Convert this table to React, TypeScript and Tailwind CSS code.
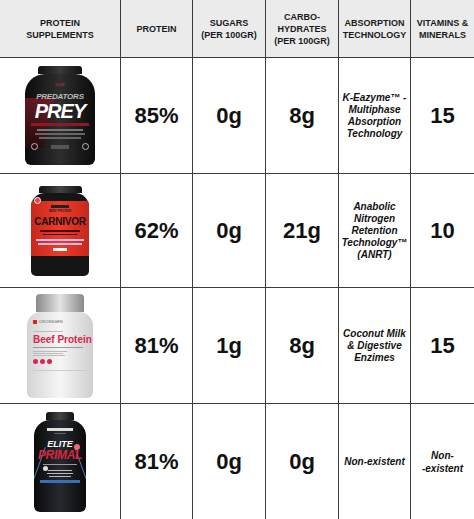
import React from 'react';

type Row = {
  tub: React.ReactNode;
  protein: string;
  sugars: string;
  carbs: string;
  tech: string[];
  vitamins: string | string[];
};

const PreyTub = () => (
  <div className="flex flex-col items-center">
    <div className="w-[44px] h-[8px] rounded-t-[3px] bg-gradient-to-r from-[#111] via-[#3a3a3a] to-[#111]" />
    <div className="relative w-[70px] h-[91px] rounded-t-[20px] rounded-b-[6px] bg-gradient-to-r from-[#0c0c0c] via-[#2e2e2e] to-[#0c0c0c] overflow-hidden flex flex-col items-center pt-[10px]">
      <div className="absolute left-[-6px] top-[24px] w-[30px] h-[50px] -skew-x-12 bg-gradient-to-b from-[#7a1a22] to-[#2a0a0c] opacity-80" />
      <div className="text-[3px] text-[#c33] leading-none">IDONE</div>
      <div className="relative mt-[6px] text-[8px] font-bold italic text-[#bdbdbd] leading-none tracking-tight">PREDATORS</div>
      <div className="relative text-[20px] font-black italic text-white leading-none tracking-tighter">PREY</div>
      <div className="relative mt-[2px] w-[58px] h-[3px] bg-[#8b1a22]" />
      <div className="relative mt-[3px] w-[46px] h-[2px] bg-[#777]" />
      <div className="relative mt-[2px] w-[50px] h-[2px] bg-[#666]" />
      <div className="relative mt-[2px] w-[42px] h-[2px] bg-[#666]" />
      <div className="relative mt-[4px] w-[58px] flex justify-between items-center">
        <div className="w-[7px] h-[7px] rounded-full border border-[#bbb]" />
        <div className="w-[18px] h-[4px] bg-[#555]" />
        <div className="w-[7px] h-[7px] rounded-full border border-[#bbb]" />
      </div>
    </div>
  </div>
);

const CarnivorTub = () => (
  <div className="flex flex-col items-center">
    <div className="w-[43px] h-[7px] rounded-t-[3px] bg-gradient-to-r from-[#111] via-[#444] to-[#111]" />
    <div className="relative w-[58px] h-[83px] rounded-t-[14px] rounded-b-[5px] bg-[#151515] overflow-hidden flex flex-col items-center">
      <div className="mt-[8px] w-full h-[55px] bg-gradient-to-r from-[#c8281c] via-[#ee3b2a] to-[#c8281c] flex flex-col items-center pt-[4px]">
        <div className="w-[18px] h-[3px] bg-[#222]" />
        <div className="mt-[2px] text-[3px] font-bold text-[#222] leading-none">BEEF PROTEIN</div>
        <div className="mt-[4px] text-[10px] font-bold text-[#111] leading-none tracking-tight">CARNIVOR</div>
        <div className="mt-[3px] w-[40px] h-[2px] bg-[#400]" />
        <div className="mt-[2px] w-[34px] h-[1px] bg-[#400]" />
        <div className="mt-[4px] w-[48px] h-[2px] bg-[#fbe]" />
        <div className="mt-[2px] w-[44px] h-[2px] bg-[#fbe]" />
        <div className="mt-[3px] w-[14px] h-[3px] bg-white" />
      </div>
      <div className="absolute left-[3px] top-[4px] w-[7px] h-[7px] rounded-full bg-[#e44] border border-white" />
    </div>
  </div>
);

const BeefTub = () => (
  <div className="flex flex-col items-center">
    <div className="w-[48px] h-[18px] rounded-t-[4px] bg-gradient-to-r from-[#8a8a8a] via-[#e4e4e4] to-[#8a8a8a]" />
    <div className="w-[66px] h-[86px] rounded-t-[14px] rounded-b-[6px] bg-gradient-to-r from-[#d4d4d4] via-[#f6f6f6] to-[#cfcfcf] flex flex-col items-start pl-[6px] pt-[8px]">
      <div className="flex items-center gap-[2px]">
        <div className="w-[4px] h-[4px] bg-[#d22]" />
        <div className="text-[4px] text-[#555] leading-none tracking-wide">CROSSGEN</div>
      </div>
      <div className="mt-[5px] w-[30px] h-[3px] border-b border-[#bbb] rounded-full" />
      <div className="mt-[3px] text-[10px] font-bold text-[#d8264c] leading-none">Beef Protein</div>
      <div className="mt-[2px] w-[50px] h-[1px] bg-[#999]" />
      <div className="mt-[3px] w-[34px] h-[1px] bg-[#bbb]" />
      <div className="mt-[1px] w-[30px] h-[1px] bg-[#bbb]" />
      <div className="mt-[1px] w-[32px] h-[1px] bg-[#bbb]" />
      <div className="mt-[3px] flex gap-[2px]">
        <div className="w-[5px] h-[5px] rounded-full bg-[#d8264c]" />
        <div className="w-[5px] h-[5px] rounded-full bg-[#d8264c]" />
        <div className="w-[5px] h-[5px] rounded-full bg-[#d8264c]" />
      </div>
      <div className="mt-[6px] w-[54px] h-[1px] bg-[#ccc]" />
    </div>
  </div>
);

const PrimalTub = () => (
  <div className="flex flex-col items-center">
    <div className="w-[28px] h-[8px] rounded-t-[3px] bg-gradient-to-r from-[#111] via-[#444] to-[#111]" />
    <div className="relative w-[52px] h-[92px] rounded-t-[16px] rounded-b-[6px] bg-gradient-to-r from-[#0a0a0a] via-[#262a30] to-[#0a0a0a] overflow-hidden flex flex-col items-center pt-[8px]">
      <div className="absolute left-[4px] top-[26px] w-[1px] h-[40px] bg-[#4a7ab8] rotate-[20deg]" />
      <div className="absolute right-[4px] top-[26px] w-[1px] h-[40px] bg-[#4a7ab8] -rotate-[20deg]" />
      <div className="w-[26px] h-[3px] bg-[#ddd]" />
      <div className="mt-[1px] text-[2px] text-[#ccc] leading-none">NUTRITION</div>
      <div className="relative mt-[6px] text-[9px] font-black italic text-white leading-none">ELITE</div>
      <div className="relative text-[12px] font-black italic text-[#d8263a] leading-none tracking-tight">PRIMAL</div>
      <div className="mt-[3px] w-[34px] h-[1px] bg-[#999]" />
      <div className="mt-[5px] w-[24px] h-[1px] bg-[#bbb]" />
      <div className="mt-[2px] w-[26px] h-[1px] bg-[#bbb]" />
      <div className="mt-[2px] w-[22px] h-[1px] bg-[#bbb]" />
      <div className="mt-[3px] w-[40px] h-[3px] bg-[#3b6fb3]" />
      <div className="absolute left-[9px] top-[46px] w-[5px] h-[5px] rounded-full bg-[#ddd]" />
      <div className="absolute right-[6px] top-[24px] w-[6px] h-[6px] rounded-full bg-[#e8687c]" />
    </div>
  </div>
);

const rows: Row[] = [
  { tub: <PreyTub />, protein: '85%', sugars: '0g', carbs: '8g', tech: ['K-Eazyme™ -', 'Multiphase', 'Absorption', 'Technology'], vitamins: '15' },
  { tub: <CarnivorTub />, protein: '62%', sugars: '0g', carbs: '21g', tech: ['Anabolic', 'Nitrogen', 'Retention', 'Technology™', '(ANRT)'], vitamins: '10' },
  { tub: <BeefTub />, protein: '81%', sugars: '1g', carbs: '8g', tech: ['Coconut Milk', '& Digestive', 'Enzimes'], vitamins: '15' },
  { tub: <PrimalTub />, protein: '81%', sugars: '0g', carbs: '0g', tech: ['Non-existent'], vitamins: ['Non-', '-existent'] },
];

const headers = [
  ['PROTEIN', 'SUPPLEMENTS'],
  ['PROTEIN'],
  ['SUGARS', '(PER 100GR)'],
  ['CARBO-', 'HYDRATES', '(PER 100GR)'],
  ['ABSORPTION', 'TECHNOLOGY'],
  ['VITAMINS &', 'MINERALS'],
];

const App = () => {
  return (
    <div className="w-[474px] h-[519px] overflow-hidden bg-[#3c3c3c] font-['Liberation_Sans',Arial,sans-serif] text-[#111]">
      <div className="grid grid-cols-[120px_71px_72px_72px_71px_1fr] grid-rows-[57px_115px_113px_115px_1fr] gap-px h-full">
        {headers.map((h, i) => (
          <div key={i} className="bg-[#ebebeb] flex flex-col items-center justify-center text-[9px] font-bold leading-[12px] text-center text-[#1a1a1a]">
            {h.map((l) => <span key={l}>{l}</span>)}
          </div>
        ))}
        {rows.map((r, i) => (
          <React.Fragment key={i}>
            <div className="bg-white flex items-center justify-center">{r.tub}</div>
            <div className="bg-white flex items-center justify-center text-[22px] font-bold">{r.protein}</div>
            <div className="bg-white flex items-center justify-center text-[22px] font-bold">{r.sugars}</div>
            <div className="bg-white flex items-center justify-center text-[22px] font-bold">{r.carbs}</div>
            <div className="bg-white flex flex-col items-center justify-center text-[10px] font-bold italic leading-[12px] text-center">
              {r.tech.map((l) => <span key={l}>{l}</span>)}
            </div>
            <div className="bg-white flex flex-col items-center justify-center">
              {Array.isArray(r.vitamins) ? (
                r.vitamins.map((l) => (
                  <span key={l} className="text-[10px] font-bold italic leading-[13px]">{l}</span>
                ))
              ) : (
                <span className="text-[22px] font-bold">{r.vitamins}</span>
              )}
            </div>
          </React.Fragment>
        ))}
      </div>
    </div>
  );
};

export default App;
